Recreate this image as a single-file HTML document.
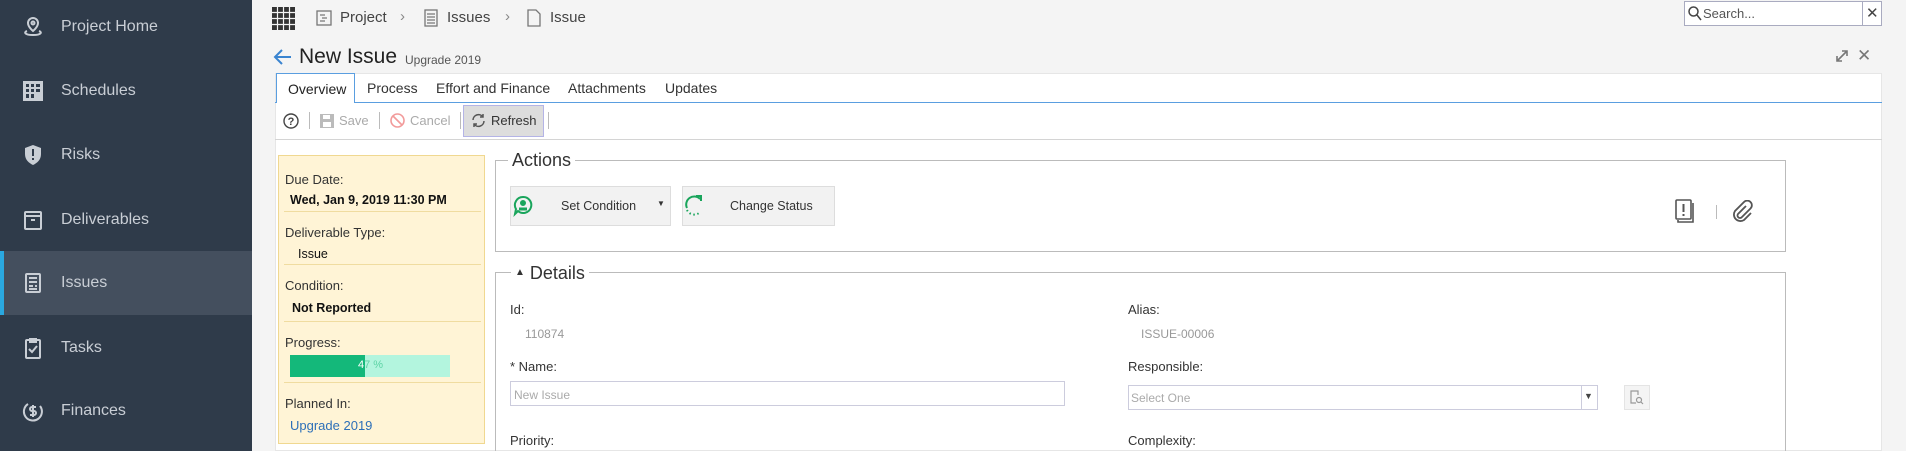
<!DOCTYPE html>
<html style="overflow:hidden"><head><meta charset="utf-8"><style>
*{box-sizing:border-box;margin:0;padding:0}
html,body{width:1906px;height:451px;overflow:hidden}
body{background:#f4f4f4;font-family:"Liberation Sans",sans-serif;position:relative;color:#333}
.a{position:absolute;white-space:nowrap}
#side{position:absolute;left:0;top:0;width:252px;height:451px;background:#2f3b4a}
.si{position:absolute;left:0;width:252px;height:64px;color:#c9ced5;font-size:16px}
.si span{position:absolute;left:61px;top:50%;transform:translateY(-50%)}
.si svg{position:absolute;left:22px;top:50%;transform:translateY(-50%)}
.act{background:#444f5e;border-left:4px solid #2aa8e0}
.lbl{font-size:13px;color:#333}
.line{position:absolute;left:284px;width:197px;height:1px;background:#f0dca0}
</style></head><body>
<div id="side">
 <div class="si" style="top:-5px"><svg width="22" height="22" viewBox="0 0 22 22" fill="none" stroke="#c9ced5" stroke-width="2"><path d="M11 2a5 5 0 0 1 5 5c0 4-5 8-5 8s-5-4-5-8a5 5 0 0 1 5-5z"/><circle cx="11" cy="7" r="1.5"/><path d="M5 15c-3 1-3 4 6 4s9-3 6-4"/></svg><span>Project Home</span></div>
 <div class="si" style="top:59px"><svg width="22" height="22" viewBox="0 0 22 22"><rect x="1" y="1" width="20" height="20" fill="#c9ced5"/><path d="M4 4h3v3H4zM9 4h3v3H9zM14 4h4v3h-4zM4 9h3v3H4zM9 9h3v3H9zM14 9h4v3h-4zM4 14h3v4H4zM9 14h3v4H9z" fill="#2f3b4a"/></svg><span>Schedules</span></div>
 <div class="si" style="top:123px"><svg width="22" height="22" viewBox="0 0 22 22"><path d="M11 1l8 3v6c0 6-4 9-8 11-4-2-8-5-8-11V4z" fill="#c9ced5"/><path d="M10 5h2v7h-2zM10 14h2v2h-2z" fill="#2f3b4a"/></svg><span>Risks</span></div>
 <div class="si" style="top:188px"><svg width="22" height="22" viewBox="0 0 22 22" fill="none" stroke="#c9ced5" stroke-width="2"><rect x="3" y="3" width="16" height="17" rx="1"/><path d="M3 7h16M9 11h4"/></svg><span>Deliverables</span></div>
 <div class="si act" style="top:251px"><svg width="22" height="22" viewBox="0 0 22 22" fill="none" stroke="#c9ced5" stroke-width="2" style="left:18px"><rect x="4" y="2" width="14" height="18" rx="1"/><path d="M7 6h8M7 10h8M7 14h4M13 14h2M7 17h8"/></svg><span style="left:57px">Issues</span></div>
 <div class="si" style="top:316px"><svg width="22" height="22" viewBox="0 0 22 22" fill="none" stroke="#c9ced5" stroke-width="2"><rect x="4" y="3" width="14" height="18" rx="1"/><path d="M8 2h6v3H8zM7 12l3 3 5-6"/></svg><span>Tasks</span></div>
 <div class="si" style="top:379px"><svg width="22" height="22" viewBox="0 0 22 22" fill="none" stroke="#c9ced5" stroke-width="2"><path d="M18 6a9 9 0 1 1-12-2"/><path d="M14 7h-4a2 2 0 0 0 0 4h2a2 2 0 0 1 0 4H8M11 5v12"/></svg><span>Finances</span></div>
</div>

<svg class="a" style="left:272px;top:7px" width="23" height="23" viewBox="0 0 23 23"><rect x="0" y="0" width="23" height="23" fill="#333"/><path d="M5.5 0v23M11.5 0v23M17.5 0v23M0 5.5h23M0 11.5h23M0 17.5h23" stroke="#f4f4f4" stroke-width="1.2"/></svg>
<svg class="a" style="left:316px;top:10px" width="16" height="16" viewBox="0 0 16 16" fill="none" stroke="#777" stroke-width="1.3"><rect x="1" y="1" width="14" height="14"/><path d="M4 5h5M6 8h5M4 11h5"/></svg>
<div class="a" style="left:340px;top:9px;font-size:15px;color:#444">Project</div>
<div class="a" style="left:400px;top:8px;font-size:15px;color:#888">&#x203A;</div>
<svg class="a" style="left:424px;top:9px" width="14" height="18" viewBox="0 0 14 18" fill="none" stroke="#777" stroke-width="1.3"><rect x="1" y="1" width="12" height="16"/><path d="M3 5h8M3 8h8M3 11h8M3 14h8"/></svg>
<div class="a" style="left:447px;top:9px;font-size:15px;color:#444">Issues</div>
<div class="a" style="left:505px;top:8px;font-size:15px;color:#888">&#x203A;</div>
<svg class="a" style="left:527px;top:9px" width="14" height="18" viewBox="0 0 14 18" fill="none" stroke="#777" stroke-width="1.3"><path d="M1 1h8l4 4v12H1z"/></svg>
<div class="a" style="left:550px;top:9px;font-size:15px;color:#444">Issue</div>

<div class="a" style="left:1684px;top:1px;width:198px;height:25px;border:1px solid #a9abc0;background:#fff"></div>
<svg class="a" style="left:1688px;top:6px" width="14" height="15" viewBox="0 0 14 15" fill="none" stroke="#444" stroke-width="1.5"><circle cx="5.5" cy="5.5" r="4.5"/><path d="M9 9l4 5"/></svg>
<div class="a" style="left:1703px;top:6px;font-size:13px;color:#555">Search...</div>
<div class="a" style="left:1862px;top:1px;width:1px;height:25px;background:#a9abc0"></div>
<div class="a" style="left:1866px;top:4px;font-size:15px;color:#444">&#x2715;</div>

<svg class="a" style="left:273px;top:48px" width="19" height="18" viewBox="0 0 19 18" fill="none" stroke="#3a84d0" stroke-width="2"><path d="M18 9H2M9 2L2 9l7 7"/></svg>
<div class="a" style="left:299px;top:45px;font-size:21px;color:#222">New Issue</div>
<div class="a" style="left:405px;top:53px;font-size:12px;color:#555">Upgrade 2019</div>
<svg class="a" style="left:1835px;top:49px" width="14" height="14" viewBox="0 0 14 14" fill="none" stroke="#777" stroke-width="1.6"><path d="M2 12L12 2M7 2h5v5M2 7v5h5"/></svg>
<div class="a" style="left:1857px;top:46px;font-size:17px;color:#777">&#x2715;</div>

<div class="a" style="left:275px;top:73px;width:1607px;height:378px;background:#fff;border:1px solid #e6e6e6"></div>
<div class="a" style="left:275px;top:102px;width:1607px;height:1px;background:#5a9ee0"></div>
<div class="a" style="left:276px;top:73px;width:79px;height:30px;background:#fff;border:1px solid #5a9ee0;border-bottom:none"></div>
<div class="a" style="left:288px;top:81px;font-size:14px;color:#222">Overview</div>
<div class="a" style="left:367px;top:80px;font-size:14px;color:#333">Process</div>
<div class="a" style="left:436px;top:80px;font-size:14px;color:#333">Effort and Finance</div>
<div class="a" style="left:568px;top:80px;font-size:14px;color:#333">Attachments</div>
<div class="a" style="left:665px;top:80px;font-size:14px;color:#333">Updates</div>

<div class="a" style="left:275px;top:139px;width:1607px;height:1px;background:#d4d4d4"></div>
<svg class="a" style="left:283px;top:113px" width="16" height="16" viewBox="0 0 16 16"><circle cx="8" cy="8" r="7" fill="none" stroke="#444" stroke-width="1.4"/><text x="8" y="12" font-size="11" text-anchor="middle" fill="#444" font-family="Liberation Sans" font-weight="bold">?</text></svg>
<div class="a" style="left:309px;top:112px;width:1px;height:17px;background:#bbb"></div>
<svg class="a" style="left:320px;top:114px" width="14" height="14" viewBox="0 0 14 14"><rect x="0" y="0" width="14" height="14" fill="#bbb"/><rect x="3" y="1" width="7" height="4" fill="#fff"/><rect x="3" y="8" width="8" height="5" fill="#fff"/></svg>
<div class="a" style="left:339px;top:113px;font-size:13px;color:#aaa">Save</div>
<div class="a" style="left:379px;top:112px;width:1px;height:17px;background:#bbb"></div>
<svg class="a" style="left:390px;top:113px" width="15" height="15" viewBox="0 0 15 15" fill="none" stroke="#f29a9a" stroke-width="1.6"><circle cx="7.5" cy="7.5" r="6.5"/><path d="M3 3l9 9"/></svg>
<div class="a" style="left:410px;top:113px;font-size:13px;color:#aaa">Cancel</div>
<div class="a" style="left:460px;top:112px;width:1px;height:17px;background:#bbb"></div>
<div class="a" style="left:463px;top:105px;width:81px;height:32px;background:#ddd;border:1px solid #b4b4e6"></div>
<svg class="a" style="left:471px;top:113px" width="15" height="15" viewBox="0 0 15 15" fill="none" stroke="#555" stroke-width="1.5"><path d="M2 7a5.5 5.5 0 0 1 10-3M13 8a5.5 5.5 0 0 1-10 3"/><path d="M12 1v3h-3M3 14v-3h3"/></svg>
<div class="a" style="left:491px;top:113px;font-size:13px;color:#333">Refresh</div>
<div class="a" style="left:548px;top:112px;width:1px;height:17px;background:#bbb"></div>

<div class="a" style="left:278px;top:155px;width:207px;height:289px;background:#fff4d6;border:1px solid #f0d890"></div>
<div class="a lbl" style="left:285px;top:172px">Due Date:</div>
<div class="a" style="left:290px;top:193px;font-size:12.5px;font-weight:bold;color:#111">Wed, Jan 9, 2019 11:30 PM</div>
<div class="line" style="top:211px"></div>
<div class="a lbl" style="left:285px;top:225px">Deliverable Type:</div>
<div class="a" style="left:298px;top:247px;font-size:12.5px;color:#111">Issue</div>
<div class="line" style="top:264px"></div>
<div class="a lbl" style="left:285px;top:278px">Condition:</div>
<div class="a" style="left:292px;top:301px;font-size:12.5px;font-weight:bold;color:#111">Not Reported</div>
<div class="line" style="top:321px"></div>
<div class="a lbl" style="left:285px;top:335px">Progress:</div>
<div class="a" style="left:290px;top:355px;width:160px;height:22px;background:#b3f5de"></div>
<div class="a" style="left:290px;top:355px;width:75px;height:22px;background:#14b87a"></div>
<div class="a" style="left:358px;top:359px;font-size:11px;color:#fff">4<span style="color:#5dd3a5">7 %</span></div>
<div class="line" style="top:382px"></div>
<div class="a lbl" style="left:285px;top:396px">Planned In:</div>
<div class="a" style="left:290px;top:418px;font-size:13px;color:#2d6fb8">Upgrade 2019</div>

<div class="a" style="left:495px;top:160px;width:1291px;height:92px;border:1px solid #bbb"></div>
<div class="a" style="left:508px;top:150px;background:#fff;padding:0 4px;font-size:18px;color:#333">Actions</div>
<div class="a" style="left:510px;top:186px;width:161px;height:40px;background:#f2f2f2;border:1px solid #ddd"></div>
<svg class="a" style="left:513px;top:195px" width="20" height="22" viewBox="0 0 20 22" fill="none" stroke="#1aa55c" stroke-width="2"><path d="M10 2a8 8 0 1 1-5 14l-3 3 1-5A8 8 0 0 1 10 2z"/><circle cx="10" cy="8" r="2" fill="#1aa55c"/><path d="M6 14h8" stroke-width="3"/></svg>
<div class="a" style="left:561px;top:199px;font-size:12.5px;color:#333">Set Condition</div>
<div class="a" style="left:657px;top:199px;font-size:8px;color:#333">&#x25BC;</div>
<div class="a" style="left:682px;top:186px;width:153px;height:40px;background:#f2f2f2;border:1px solid #ddd"></div>
<svg class="a" style="left:684px;top:194px" width="20" height="22" viewBox="0 0 20 22" fill="none" stroke="#1aa55c" stroke-width="2"><path d="M16 5A8 8 0 0 0 3 14"/><path d="M12 2h5v5"/><path d="M3 16a8 8 0 0 0 12 3" stroke-dasharray="1.5 2.5"/></svg>
<div class="a" style="left:730px;top:199px;font-size:12.5px;color:#333">Change Status</div>
<svg class="a" style="left:1675px;top:199px" width="19" height="24" viewBox="0 0 19 24" fill="none" stroke="#555" stroke-width="1.6"><rect x="1" y="1" width="15" height="19" rx="1"/><path d="M3 21v2h15V4"/><path d="M8.5 5v8M8.5 15v2" stroke-width="2"/></svg>
<div class="a" style="left:1716px;top:205px;width:1px;height:14px;background:#bbb"></div>
<svg class="a" style="left:1731px;top:200px" width="24" height="24" viewBox="0 0 24 24" fill="none" stroke="#555" stroke-width="1.8"><path d="M15 6l-8 8a2.5 2.5 0 0 0 3.5 3.5l9-9a4.5 4.5 0 0 0-6.5-6.5l-9 9a6.5 6.5 0 0 0 9 9l7-7"/></svg>

<div class="a" style="left:495px;top:272px;width:1291px;height:190px;border:1px solid #bbb"></div>
<div class="a" style="left:511px;top:263px;background:#fff;padding:0 4px;font-size:18px;color:#333"><span style="font-size:10px;vertical-align:4px">&#x25B2;</span> Details</div>
<div class="a lbl" style="left:510px;top:302px">Id:</div>
<div class="a" style="left:525px;top:327px;font-size:12px;color:#999">110874</div>
<div class="a lbl" style="left:510px;top:359px">* Name:</div>
<div class="a" style="left:510px;top:381px;width:555px;height:25px;border:1px solid #ccd"></div>
<div class="a" style="left:514px;top:388px;font-size:12px;color:#aaa">New Issue</div>
<div class="a lbl" style="left:510px;top:433px">Priority:</div>
<div class="a lbl" style="left:1128px;top:302px">Alias:</div>
<div class="a" style="left:1141px;top:327px;font-size:12px;color:#999">ISSUE-00006</div>
<div class="a lbl" style="left:1128px;top:359px">Responsible:</div>
<div class="a" style="left:1128px;top:385px;width:470px;height:25px;border:1px solid #ccd"></div>
<div class="a" style="left:1581px;top:385px;width:1px;height:25px;background:#ccd"></div>
<div class="a" style="left:1584px;top:391px;font-size:9px;color:#444">&#x25BC;</div>
<div class="a" style="left:1131px;top:391px;font-size:12px;color:#aaa">Select One</div>
<div class="a" style="left:1624px;top:385px;width:26px;height:25px;background:#f4f4f4;border:1px solid #e4e4e4"></div>
<svg class="a" style="left:1630px;top:390px" width="14" height="15" viewBox="0 0 14 15" fill="none" stroke="#999" stroke-width="1.2"><path d="M6 13H1V1h7v4"/><circle cx="9" cy="10" r="2.5"/><path d="M11 12l2 2"/></svg>
<div class="a lbl" style="left:1128px;top:433px">Complexity:</div>
</body></html>
